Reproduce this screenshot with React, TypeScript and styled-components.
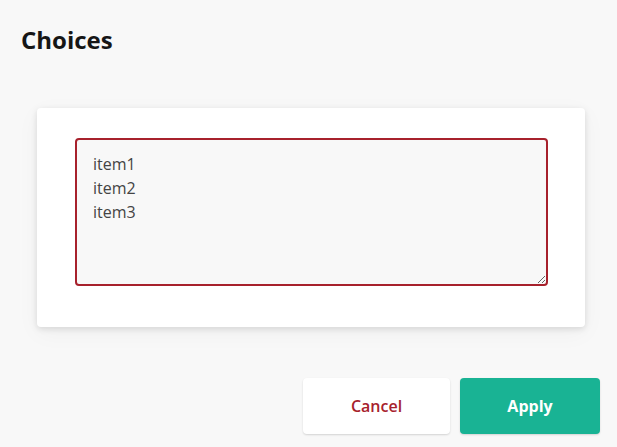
import React from 'react';
import styled, { createGlobalStyle } from 'styled-components';

const GlobalStyle = createGlobalStyle`
	html, body {
		margin: 0;
		padding: 0;
		background: #f8f8f8;
		font-family: 'Open Sans', 'Liberation Sans', sans-serif;
	}
`;

const Page = styled.div`
	display: flex;
	flex-direction: column;
	width: 617px;
	height: 447px;
	box-sizing: border-box;
	padding: 24px 17px 0 21px;
`;

const Title = styled.h1`
	margin: 0;
	font-size: 24px;
	line-height: 32px;
	font-weight: 700;
	color: #161616;
`;

const Card = styled.div`
	margin: 52px 15px 0 16px;
	padding: 30px 37px 41px 38px;
	background: #fff;
	border-radius: 4px;
	box-shadow: 0 2px 6px rgba(0, 0, 0, 0.12), 0 6px 24px rgba(0, 0, 0, 0.04);
`;

const TextArea = styled.textarea`
	display: block;
	box-sizing: border-box;
	width: 100%;
	height: 148px;
	margin: 0;
	padding: 12px 16px;
	border: 2px solid #a7212c;
	border-radius: 4px;
	background: #f8f8f8;
	color: #444;
	font-family: inherit;
	font-size: 16px;
	line-height: 24px;
	outline: none;
`;

const Footer = styled.div`
	display: flex;
	justify-content: flex-end;
	gap: 10px;
	margin-top: 51px;
`;

const Button = styled.button<{ $primary?: boolean }>`
	height: 56px;
	width: ${(p) => (p.$primary ? '140px' : '147px')};
	border: none;
	border-radius: 4px;
	font-family: inherit;
	font-size: 16px;
	font-weight: ${(p) => (p.$primary ? 700 : 600)};
	background: ${(p) => (p.$primary ? '#19b394' : '#fff')};
	color: ${(p) => (p.$primary ? '#fff' : '#a7212c')};
	box-shadow: 0 1px 2px rgba(0, 0, 0, 0.15);
	cursor: pointer;
`;

export default function App() {
	return (
		<>
			<GlobalStyle />
			<Page>
				<Title>Choices</Title>
				<Card>
					<TextArea defaultValue={'item1\nitem2\nitem3'} />
				</Card>
				<Footer>
					<Button>Cancel</Button>
					<Button $primary>Apply</Button>
				</Footer>
			</Page>
		</>
	);
}
